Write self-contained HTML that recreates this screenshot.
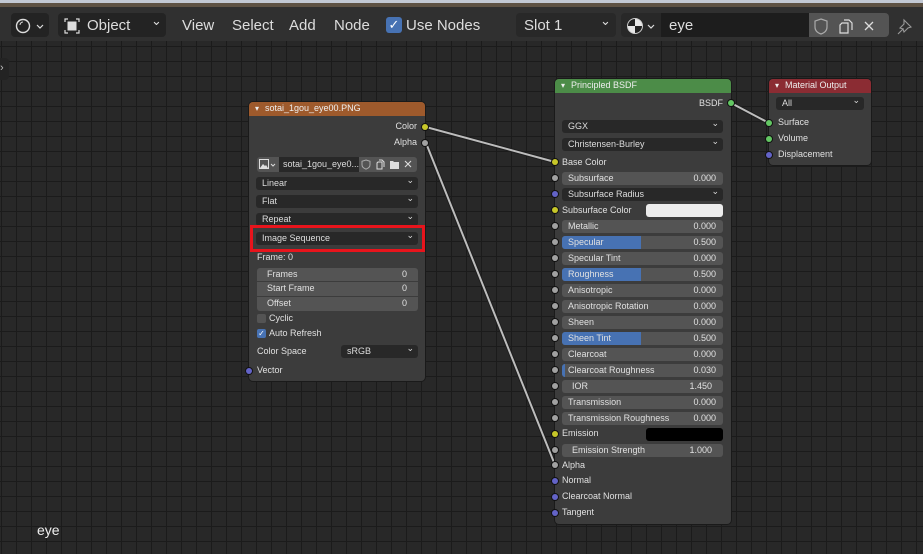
<!DOCTYPE html>
<html><head><meta charset="utf-8"><style>
*{box-sizing:border-box;margin:0;padding:0}
body{width:923px;height:554px;overflow:hidden;position:relative;font-family:"Liberation Sans","DejaVu Sans",sans-serif;color:#e6e6e6;
background-color:#282828;
background-image:linear-gradient(90deg,#1b1b1b 1px,transparent 1px),linear-gradient(#1b1b1b 1px,transparent 1px);
background-size:15px 15px;background-position:1px 1px}
.a{position:absolute}
#top{left:0;top:0;width:923px;height:3px;background:#c3c9d4}
#top2{left:0;top:3px;width:923px;height:4px;background:#5e5244}
#hdr{left:0;top:7px;width:923px;height:34px;background:#303030;font-size:15px}
.btn{position:absolute;top:6px;height:24px;background:#232323;border-radius:4px}
.ht{position:absolute;top:10px;color:#ddd}
.node{position:absolute;background:#3c3c3c;border-radius:4px;box-shadow:0 0 0 1px #1a1a1a;font-size:9px}
.nh{position:absolute;left:0;top:0;right:0;height:14px;border-radius:4px 4px 0 0;padding-left:16px;line-height:13px;color:#eee;font-size:9px}
.nh:before{content:"▾";position:absolute;left:6px;font-size:8px}
.t{position:absolute;font-size:9px;line-height:11px;color:#e0e0e0;white-space:nowrap}
.dd{position:absolute;height:13px;background:#282828;border-radius:3px;padding-left:6px;line-height:13px;font-size:9px;color:#ddd;white-space:nowrap;overflow:hidden}
.dd:after{content:"⌄";position:absolute;right:4px;top:-3px;font-size:9px}
.sl{position:absolute;height:13px;background:#545454;border-radius:3px;line-height:13px;font-size:9px;color:#e0e0e0;overflow:hidden}
.sl .f{position:absolute;left:0;top:0;bottom:0;background:#4772b3}
.sl .l{position:absolute;left:6px}
.sl .v{position:absolute;right:7px}
.so{position:absolute;width:6px;height:6px;border-radius:50%;background:#a1a1a1;box-shadow:0 0 0 1px #111}
.y{background:#c7c729}.p{background:#6363c7}.g{background:#63c763}
</style></head><body>
<div class="a" id="top"></div><div class="a" id="top2"></div>
<div class="a" id="hdr">
 <div class="btn" style="left:11px;width:38px"></div>
 <svg class="a" style="left:15px;top:11px" width="32" height="16"><circle cx="8" cy="8" r="6.5" fill="none" stroke="#ddd" stroke-width="1.4"/><path d="M5 7a3 3 0 0 1 3-3" stroke="#ddd" fill="none"/><path d="M22 7l3 3 3-3" stroke="#ddd" fill="none" stroke-width="1.2"/></svg>
 <div class="btn" style="left:58px;width:108px"></div>
 <svg class="a" style="left:63px;top:10px" width="18" height="18"><path d="M2 5V2h3M13 2h3v3M16 13v3h-3M5 16H2v-3" stroke="#ddd" fill="none" stroke-width="1.2"/><rect x="4.5" y="4.5" width="9" height="9" fill="#ddd"/></svg>
 <div class="ht" style="left:87px">Object</div>
 <div class="ht" style="left:151px;top:6px;font-size:13px">⌄</div>
 <div class="ht" style="left:182px">View</div>
 <div class="ht" style="left:232px">Select</div>
 <div class="ht" style="left:289px">Add</div>
 <div class="ht" style="left:334px">Node</div>
 <div class="a" style="left:386px;top:10px;width:16px;height:16px;background:#4772b3;border-radius:3px;color:#fff;font-size:13px;line-height:16px;text-align:center">✓</div>
 <div class="ht" style="left:406px">Use Nodes</div>
 <div class="btn" style="left:516px;width:100px;background:#282828"></div>
 <div class="ht" style="left:524px">Slot 1</div>
 <div class="ht" style="left:600px;top:6px;font-size:13px">⌄</div>
 <div class="btn" style="left:621px;width:40px;background:#282828;border-radius:4px 0 0 4px"></div>
 <svg class="a" style="left:626px;top:10px" width="32" height="18"><circle cx="9" cy="9" r="7.5" fill="#e6e6e6"/><path d="M9 9V1.5A7.5 7.5 0 0 0 1.5 9z" fill="#222"/><path d="M9 9h7.5A7.5 7.5 0 0 1 9 16.5z" fill="#222"/><circle cx="9" cy="9" r="7.5" fill="none" stroke="#ccc"/><path d="M22 8l3 3 3-3" stroke="#ddd" fill="none" stroke-width="1.2"/></svg>
 <div class="btn" style="left:661px;width:148px;background:#1d1d1d;border-radius:0"></div>
 <div class="ht" style="left:669px">eye</div>
 <div class="btn" style="left:809px;width:80px;background:#545454;border-radius:0 4px 4px 0"></div>
 <svg class="a" style="left:813px;top:11px" width="76" height="18"><path d="M8 1l6 2v6c0 4-3 6-6 7-3-1-6-3-6-7V3z" fill="none" stroke="#aaa" stroke-width="1.2"/><path d="M29 5h6v10h-8V7z M31 2h5l3 3v7" fill="none" stroke="#ddd" stroke-width="1.2"/><path d="M52 4l8 8M60 4l-8 8" stroke="#ddd" stroke-width="1.3"/></svg>
 <svg class="a" style="left:895px;top:11px" width="18" height="18"><path d="M9 2l7 7-3 1-4 4-1-3-5 5 5-5-3-1 4-4z" fill="none" stroke="#999" stroke-width="1.1"/></svg>
</div>
<div class="a" style="left:0;top:58px;width:9px;height:22px;background:#232323;border-radius:0 4px 4px 0;color:#bbb;font-size:11px;line-height:20px">›</div>

<svg class="a" style="left:0;top:0" width="923" height="554">
<g fill="none" stroke="#1e1e1e" stroke-width="4"><path d="M426 127L555 162"/><path d="M426 143L555 465"/><path d="M731 103L769 123"/></g>
<g fill="none" stroke="#bdbdbd" stroke-width="2"><path d="M426 127L555 162"/><path d="M426 143L555 465"/><path d="M731 103L769 123"/></g>
</svg>

<!-- Image node -->
<div class="node" style="left:249px;top:102px;width:176px;height:279px">
 <div class="nh" style="background:#9e5a2c">sotai_1gou_eye00.PNG</div>
 <div class="t" style="right:8px;top:19px">Color</div><div class="so y" style="right:-3px;top:22px"></div>
 <div class="t" style="right:8px;top:35px">Alpha</div><div class="so" style="right:-3px;top:38px"></div>
 <div class="a" style="left:8px;top:55px;width:22px;height:15px;background:#545454;border-radius:3px 0 0 3px"></div>
 <svg class="a" style="left:10px;top:57px" width="20" height="11"><rect x="0.5" y="0.5" width="9" height="9" fill="none" stroke="#ddd"/><path d="M1 9l3-4 2 2 1-1 2 3z" fill="#ddd"/><path d="M12 5l2 2 2-2" stroke="#ddd" fill="none"/></svg>
 <div class="a" style="left:30px;top:55px;width:80px;height:15px;background:#282828;font-size:9px;line-height:15px;padding-left:4px;color:#ddd;white-space:nowrap;overflow:hidden">sotai_1gou_eye0...</div>
 <div class="a" style="left:110px;top:55px;width:58px;height:15px;background:#545454;border-radius:0 3px 3px 0"></div>
 <svg class="a" style="left:110px;top:55px" width="58" height="15"><path d="M7 3l4 1.3v3.5c0 2.5-2 3.7-4 4.3-2-.6-4-1.8-4-4.3V4.3z" fill="none" stroke="#aaa"/><path d="M19 5h4v7h-5V6z M20 3h3l2 2v5" fill="none" stroke="#ddd"/><path d="M31 4h3l1 1h5v7h-9z" fill="#ddd"/><path d="M46 4l6 6M52 4l-6 6" stroke="#ddd" stroke-width="1.1"/></svg>
 <div class="dd" style="left:7px;top:75px;width:162px">Linear</div>
 <div class="dd" style="left:7px;top:93px;width:162px">Flat</div>
 <div class="dd" style="left:7px;top:111px;width:162px">Repeat</div>
 <div class="dd" style="left:7px;top:130px;width:162px">Image Sequence</div>
 <div class="t" style="left:8px;top:150px">Frame: 0</div>
 <div class="sl" style="left:8px;top:166px;width:161px;height:43px;background:#545454"></div>
 <div class="a" style="left:8px;top:179px;width:161px;height:1px;background:#3c3c3c"></div>
 <div class="a" style="left:8px;top:194px;width:161px;height:1px;background:#3c3c3c"></div>
 <div class="t" style="left:18px;top:167px">Frames</div><div class="t" style="right:18px;top:167px">0</div>
 <div class="t" style="left:18px;top:181px">Start Frame</div><div class="t" style="right:18px;top:181px">0</div>
 <div class="t" style="left:18px;top:196px">Offset</div><div class="t" style="right:18px;top:196px">0</div>
 <div class="a" style="left:8px;top:212px;width:9px;height:9px;background:#545454;border-radius:2px"></div>
 <div class="t" style="left:20px;top:211px">Cyclic</div>
 <div class="a" style="left:8px;top:227px;width:9px;height:9px;background:#4772b3;border-radius:2px;color:#fff;font-size:8px;line-height:9px;text-align:center">✓</div>
 <div class="t" style="left:20px;top:226px">Auto Refresh</div>
 <div class="t" style="left:8px;top:244px">Color Space</div>
 <div class="dd" style="left:92px;top:243px;width:77px">sRGB</div>
 <div class="t" style="left:8px;top:263px">Vector</div><div class="so p" style="left:-3px;top:266px"></div>
</div>
<div class="a" style="left:250px;top:225px;width:175px;height:27px;border:3px solid #e8141c"></div>

<!-- Principled -->
<div class="node" style="left:555px;top:79px;width:176px;height:445px">
 <div class="nh" style="background:#4c8c48">Principled BSDF</div>
 <div class="t" style="right:8px;top:19px">BSDF</div><div class="so g" style="right:-3px;top:21px"></div>
 <div class="dd" style="left:7px;top:41px;width:161px">GGX</div>
 <div class="dd" style="left:7px;top:59px;width:161px">Christensen-Burley</div>
</div>
<div class="a" style="left:555px;top:79px">
 <div class="t" style="left:7px;top:78px">Base Color</div><div class="so y" style="left:-3px;top:80px"></div>
 <div class="sl" style="left:7px;top:93px;width:161px"><span class="l">Subsurface</span><span class="v">0.000</span></div><div class="so" style="left:-3px;top:96px"></div>
 <div class="dd" style="left:7px;top:109px;width:161px">Subsurface Radius</div><div class="so p" style="left:-3px;top:112px"></div>
 <div class="t" style="left:7px;top:126px">Subsurface Color</div><div class="so y" style="left:-3px;top:128px"></div>
 <div class="a" style="left:91px;top:125px;width:77px;height:13px;background:#ececec;border-radius:3px"></div>
 <div class="sl" style="left:7px;top:141px;width:161px"><span class="l">Metallic</span><span class="v">0.000</span></div><div class="so" style="left:-3px;top:144px"></div>
 <div class="sl" style="left:7px;top:157px;width:161px"><div class="f" style="width:79px"></div><span class="l">Specular</span><span class="v">0.500</span></div><div class="so" style="left:-3px;top:160px"></div>
 <div class="sl" style="left:7px;top:173px;width:161px"><span class="l">Specular Tint</span><span class="v">0.000</span></div><div class="so" style="left:-3px;top:176px"></div>
 <div class="sl" style="left:7px;top:189px;width:161px"><div class="f" style="width:79px"></div><span class="l">Roughness</span><span class="v">0.500</span></div><div class="so" style="left:-3px;top:192px"></div>
 <div class="sl" style="left:7px;top:205px;width:161px"><span class="l">Anisotropic</span><span class="v">0.000</span></div><div class="so" style="left:-3px;top:208px"></div>
 <div class="sl" style="left:7px;top:221px;width:161px"><span class="l">Anisotropic Rotation</span><span class="v">0.000</span></div><div class="so" style="left:-3px;top:224px"></div>
 <div class="sl" style="left:7px;top:237px;width:161px"><span class="l">Sheen</span><span class="v">0.000</span></div><div class="so" style="left:-3px;top:240px"></div>
 <div class="sl" style="left:7px;top:253px;width:161px"><div class="f" style="width:79px"></div><span class="l">Sheen Tint</span><span class="v">0.500</span></div><div class="so" style="left:-3px;top:256px"></div>
 <div class="sl" style="left:7px;top:269px;width:161px"><span class="l">Clearcoat</span><span class="v">0.000</span></div><div class="so" style="left:-3px;top:272px"></div>
 <div class="sl" style="left:7px;top:285px;width:161px"><div class="f" style="width:3px"></div><span class="l">Clearcoat Roughness</span><span class="v">0.030</span></div><div class="so" style="left:-3px;top:288px"></div>
 <div class="sl" style="left:7px;top:301px;width:161px"><span class="l" style="left:10px">IOR</span><span class="v" style="right:11px">1.450</span></div><div class="so" style="left:-3px;top:304px"></div>
 <div class="sl" style="left:7px;top:317px;width:161px"><span class="l">Transmission</span><span class="v">0.000</span></div><div class="so" style="left:-3px;top:320px"></div>
 <div class="sl" style="left:7px;top:333px;width:161px"><span class="l">Transmission Roughness</span><span class="v">0.000</span></div><div class="so" style="left:-3px;top:336px"></div>
 <div class="t" style="left:7px;top:349px">Emission</div><div class="so y" style="left:-3px;top:352px"></div>
 <div class="a" style="left:91px;top:349px;width:77px;height:13px;background:#000;border-radius:3px"></div>
 <div class="sl" style="left:7px;top:365px;width:161px"><span class="l" style="left:10px">Emission Strength</span><span class="v" style="right:11px">1.000</span></div><div class="so" style="left:-3px;top:368px"></div>
 <div class="t" style="left:7px;top:381px">Alpha</div><div class="so" style="left:-3px;top:383px"></div>
 <div class="t" style="left:7px;top:396px">Normal</div><div class="so p" style="left:-3px;top:399px"></div>
 <div class="t" style="left:7px;top:412px">Clearcoat Normal</div><div class="so p" style="left:-3px;top:415px"></div>
 <div class="t" style="left:7px;top:428px">Tangent</div><div class="so p" style="left:-3px;top:431px"></div>
</div>

<!-- Material Output -->
<div class="node" style="left:769px;top:79px;width:102px;height:86px">
 <div class="nh" style="background:#8b2c33">Material Output</div>
 <div class="dd" style="left:7px;top:18px;width:88px">All</div>
 <div class="t" style="left:9px;top:38px">Surface</div><div class="so g" style="left:-3px;top:41px"></div>
 <div class="t" style="left:9px;top:54px">Volume</div><div class="so g" style="left:-3px;top:57px"></div>
 <div class="t" style="left:9px;top:70px">Displacement</div><div class="so p" style="left:-3px;top:73px"></div>
</div>

<div class="a" style="left:37px;top:522px;font-size:14px;color:#eee">eye</div>
</body></html>
